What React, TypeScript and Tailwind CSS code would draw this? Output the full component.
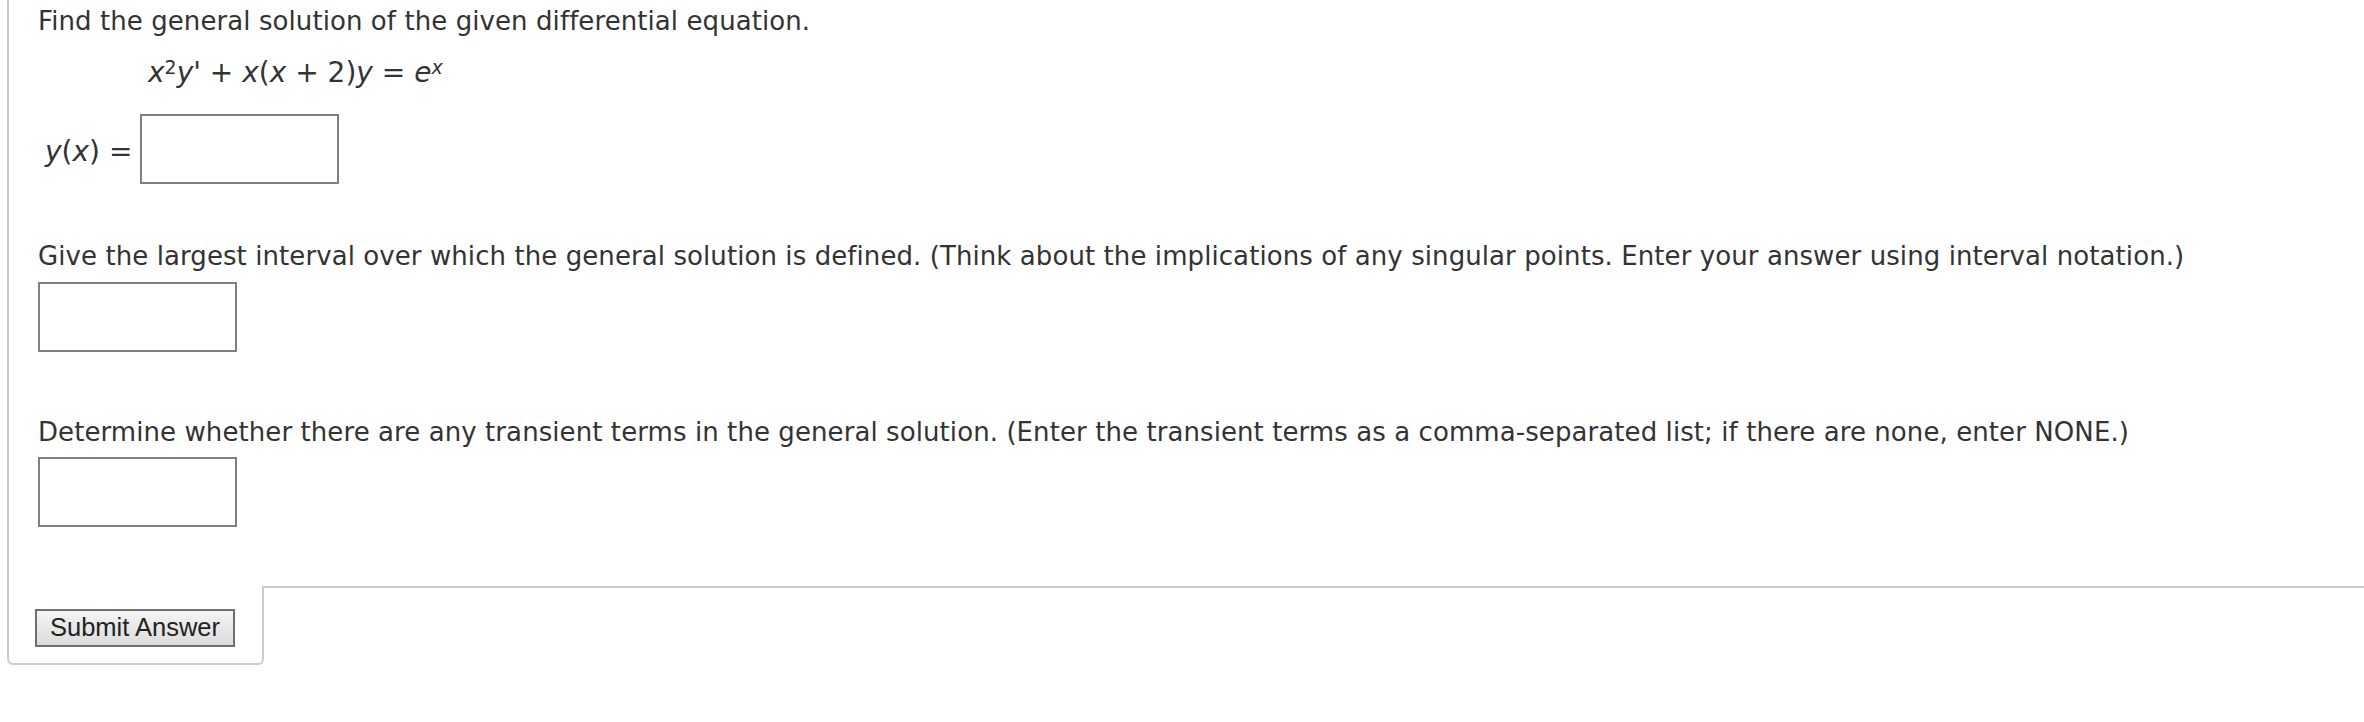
import React from "react";

function AnswerBox({ className = "" }: { className?: string }) {
  return (
    <div
      className={`w-[199px] h-[70px] border-2 border-[#808080] bg-white shrink-0 ${className}`}
    />
  );
}

function V({ children }: { children: React.ReactNode }) {
  return <span className="italic">{children}</span>;
}

function Sup({ children, italic = false }: { children: React.ReactNode; italic?: boolean }) {
  return (
    <span className={`relative -top-[8px] text-[19px] leading-none ${italic ? "italic" : ""}`}>
      {children}
    </span>
  );
}

export default function App() {
  return (
    <div
      className="min-h-screen bg-white text-[#333] text-[26px] leading-[30px] tracking-[0.08px]"
      style={{ fontFamily: '"DejaVu Sans", Verdana, sans-serif' }}
    >
      <div className="ml-[7px]">
        {/* question body */}
        <div className="border-l-2 border-[#cccccc] pl-[29px] pt-[6px] pb-[59px]">
          <p>Find the general solution of the given differential equation.</p>

          {/* equation */}
          <div className="mt-[20px] h-[34px] pl-[110px] text-[28px] leading-[34px] whitespace-pre tracking-normal">
            <V>x</V>
            <Sup>2</Sup>
            <V>y</V>
            <V>'</V> + <V>x</V>(<V>x</V> + 2)<V>y</V> = <V>e</V>
            <Sup italic>x</Sup>
          </div>

          <div className="mt-[24px] flex items-start">
            <span className="w-[102px] pl-[7px] mt-[21px] text-[28px] leading-[34px] whitespace-pre tracking-normal">
              <V>y</V>(<V>x</V>) =
            </span>
            <AnswerBox />
          </div>

          <p className="mt-[57px]">
            Give the largest interval over which the general solution is defined. (Think about the
            implications of any singular points. Enter your answer using interval notation.)
          </p>
          <AnswerBox className="mt-[11px]" />

          <p className="mt-[65px]">
            Determine whether there are any transient terms in the general solution. (Enter the
            transient terms as a comma-separated list; if there are none, enter NONE.)
          </p>
          <AnswerBox className="mt-[10px]" />
        </div>

        {/* submit tab */}
        <div className="flex">
          <div className="w-[257px] h-[79px] border-l-2 border-r-2 border-b-2 border-[#cccccc] rounded-b-[6px] pt-[23px] pl-[26px]">
            <button
              type="button"
              className="w-[200px] h-[38px] border-2 border-[#6f6f6f] bg-linear-to-b from-[#f4f4f4] to-[#dcdcdc] text-[#222] text-[25.5px] leading-none tracking-normal"
              style={{ fontFamily: '"Liberation Sans", Arial, sans-serif' }}
            >
              Submit Answer
            </button>
          </div>
          <div className="flex-1 border-t-2 border-[#cccccc]" />
        </div>
      </div>
    </div>
  );
}
